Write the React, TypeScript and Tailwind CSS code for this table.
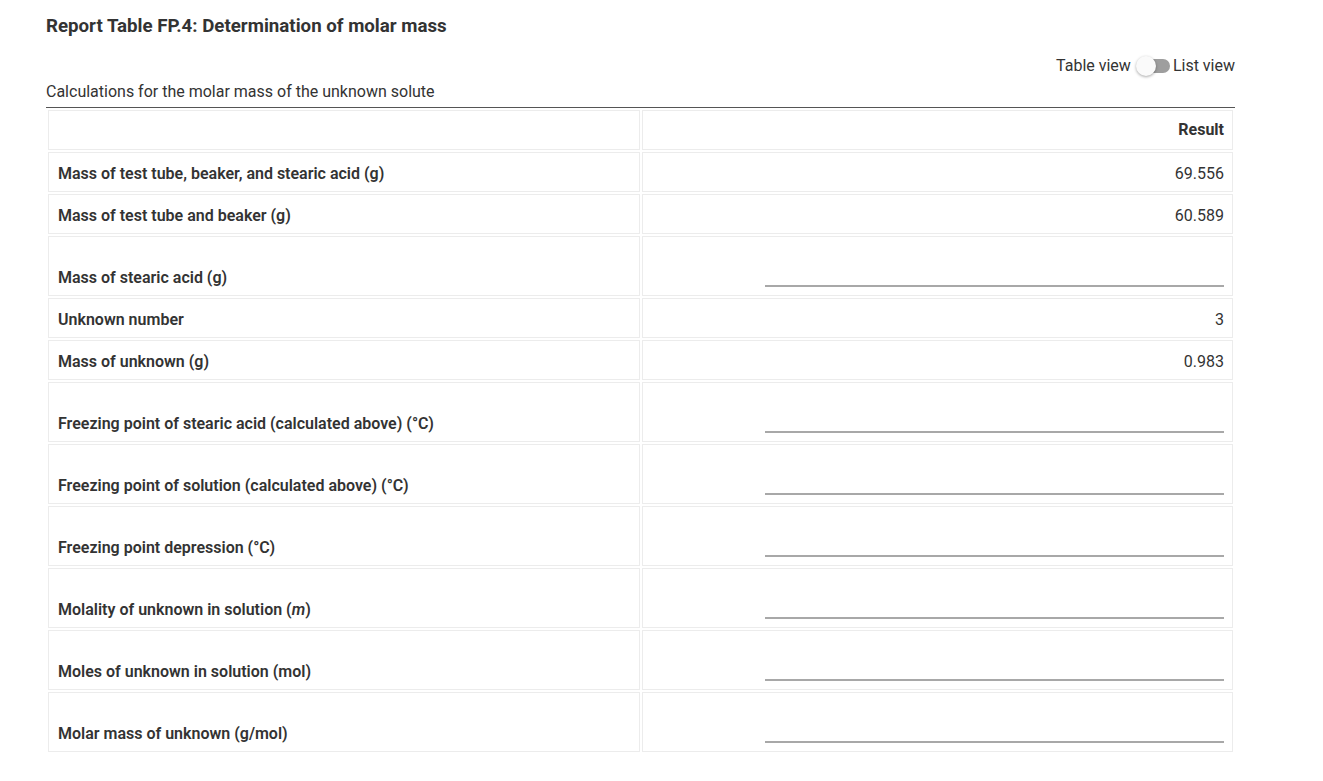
import { useState } from "react";

type Row = {
  label: React.ReactNode;
  value?: string;
};

const rows: Row[] = [
  { label: "Mass of test tube, beaker, and stearic acid (g)", value: "69.556" },
  { label: "Mass of test tube and beaker (g)", value: "60.589" },
  { label: "Mass of stearic acid (g)" },
  { label: "Unknown number", value: "3" },
  { label: "Mass of unknown (g)", value: "0.983" },
  { label: "Freezing point of stearic acid (calculated above) (°C)" },
  { label: "Freezing point of solution (calculated above) (°C)" },
  { label: "Freezing point depression (°C)" },
  {
    label: (
      <>
        Molality of unknown in solution (<i>m</i>)
      </>
    ),
  },
  { label: "Moles of unknown in solution (mol)" },
  { label: "Molar mass of unknown (g/mol)" },
];

const Toggle = () => {
  const [list, setList] = useState(false);
  return (
    <div className="flex items-center text-[16px] leading-[24px] text-[#333]">
      <span>Table view</span>
      <button
        onClick={() => setList(!list)}
        aria-label="Toggle view"
        className="relative mx-[3px] h-[20px] w-[36px] cursor-pointer"
      >
        <span className="absolute left-[10px] top-[3px] h-[14px] w-[26px] rounded-full bg-[#9e9e9e]" />
        <span
          className={`absolute top-0 h-[20px] w-[20px] rounded-full bg-[#fafafa] shadow-[0_1px_3px_rgba(0,0,0,0.35)] ${
            list ? "left-[16px]" : "left-[2px]"
          }`}
        />
      </button>
      <span>List view</span>
    </div>
  );
};

export default function App() {
  return (
    <div className="min-h-screen bg-white pl-[46px] pt-[14px] font-['Roboto',sans-serif] text-[#333]">
      <div className="w-[1189px]">
        <h1 className="text-[18.7px] font-bold leading-[24px]">Report Table FP.4: Determination of molar mass</h1>

        <div className="mt-[16px] flex justify-end">
          <Toggle />
        </div>

        <div className="mt-[4px] border-b border-[#555] pb-[5px] text-[16px] leading-[20px]">
          Calculations for the molar mass of the unknown solute
        </div>

        <table className="w-full table-fixed border-separate border-spacing-[2px] text-[16px]">
          <thead>
            <tr>
              <th className="h-[40px] border border-[#ececec]" />
              <th className="h-[40px] border border-[#ececec] px-[8px] text-right font-bold">Result</th>
            </tr>
          </thead>
          <tbody>
            {rows.map((r, i) =>
              r.value !== undefined ? (
                <tr key={i}>
                  <td className="h-[40px] border border-[#ececec] px-[9px] pt-[3px] align-middle font-semibold">
                    {r.label}
                  </td>
                  <td className="h-[40px] border border-[#ececec] px-[8px] pt-[3px] text-right align-middle">
                    {r.value}
                  </td>
                </tr>
              ) : (
                <tr key={i}>
                  <td className="h-[60px] border border-[#ececec] px-[9px] pb-[5px] align-bottom font-semibold">
                    {r.label}
                  </td>
                  <td className="h-[60px] border border-[#ececec] px-[8px] pb-[8px] align-bottom">
                    <div className="flex justify-end">
                      <input
                        type="text"
                        className="h-[24px] w-[459px] border-b-2 border-[#a8a8a8] bg-transparent text-right outline-none"
                      />
                    </div>
                  </td>
                </tr>
              )
            )}
          </tbody>
        </table>
      </div>
    </div>
  );
}
